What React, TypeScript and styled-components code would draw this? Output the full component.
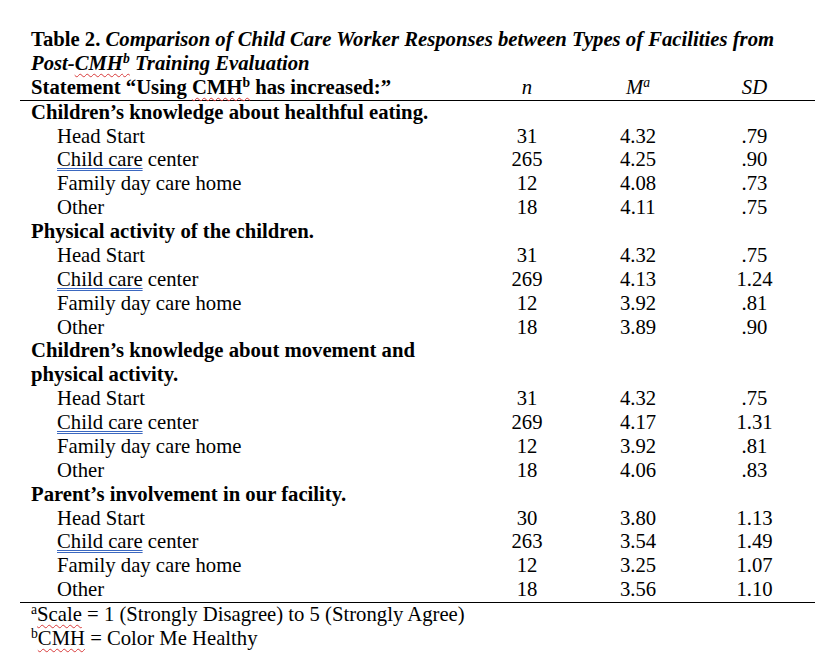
import styled, { createGlobalStyle } from 'styled-components'

const GlobalStyle = createGlobalStyle`
  html, body {
    margin: 0;
    padding: 0;
    background: #fff;
  }
  body {
    font-family: "Liberation Serif", "Times New Roman", serif;
    color: #000;
  }
`

const Page = styled.div`
  width: 819px;
  min-height: 657px;
  padding: 28px 0 0 20px;
  box-sizing: border-box;
  font-size: 20.7px;
  line-height: 23.88px;
`

const Caption = styled.div`
  padding-left: 11px;
  font-weight: 700;
  white-space: nowrap;

  em {
    font-style: italic;
  }
`

const Table = styled.div`
  width: 795px;
`

const Row = styled.div<{ $rule?: boolean }>`
  display: grid;
  grid-template-columns: 452px 110px 112px 121px;
  border-bottom: ${p => (p.$rule ? '1.3px solid #000' : 'none')};
`

const Label = styled.div<{ $indent?: boolean; $bold?: boolean }>`
  padding-left: ${p => (p.$indent ? '37px' : '11px')};
  font-weight: ${p => (p.$bold ? 700 : 400)};
`

const Cell = styled.div<{ $italic?: boolean }>`
  text-align: center;
  font-style: ${p => (p.$italic ? 'italic' : 'normal')};
`

const Sup = styled.sup`
  font-size: 0.66em;
  line-height: 0;
  vertical-align: 0.5em;
`

const Squiggle = styled.span`
  text-decoration: underline wavy #d83a3a;
  text-decoration-thickness: 1px;
  text-underline-offset: 3px;
`

const Grammar = styled.span`
  text-decoration: underline double #3b68c0;
  text-decoration-thickness: 1px;
  text-underline-offset: 2px;
`

const Notes = styled.div`
  padding-left: 11px;
`

type Item = { name: string; n: string; m: string; sd: string }
type Section = { title: string; items: Item[] }

const makeItems = (vals: [string, string, string][]): Item[] =>
  ['Head Start', 'Child care center', 'Family day care home', 'Other'].map((name, i) => ({
    name,
    n: vals[i][0],
    m: vals[i][1],
    sd: vals[i][2]
  }))

const sections: Section[] = [
  {
    title: 'Children’s knowledge about healthful eating.',
    items: makeItems([
      ['31', '4.32', '.79'],
      ['265', '4.25', '.90'],
      ['12', '4.08', '.73'],
      ['18', '4.11', '.75']
    ])
  },
  {
    title: 'Physical activity of the children.',
    items: makeItems([
      ['31', '4.32', '.75'],
      ['269', '4.13', '1.24'],
      ['12', '3.92', '.81'],
      ['18', '3.89', '.90']
    ])
  },
  {
    title: 'Children’s knowledge about movement and physical activity.',
    items: makeItems([
      ['31', '4.32', '.75'],
      ['269', '4.17', '1.31'],
      ['12', '3.92', '.81'],
      ['18', '4.06', '.83']
    ])
  },
  {
    title: 'Parent’s involvement in our facility.',
    items: makeItems([
      ['30', '3.80', '1.13'],
      ['263', '3.54', '1.49'],
      ['12', '3.25', '1.07'],
      ['18', '3.56', '1.10']
    ])
  }
]

function ItemName({ name }: { name: string }) {
  if (name === 'Child care center') {
    return (
      <>
        <Grammar>Child care</Grammar> center
      </>
    )
  }
  return <>{name}</>
}

export default function App() {
  return (
    <>
      <GlobalStyle />
      <Page>
        <Caption>
          Table 2. <em>Comparison of Child Care Worker Responses between Types of Facilities from</em>
          <br />
          <em>
            Post-<Squiggle>CMH<Sup>b</Sup></Squiggle> Training Evaluation
          </em>
        </Caption>
        <Table>
          <Row $rule>
            <Label $bold>
              Statement “Using <Squiggle>CMH<Sup>b</Sup></Squiggle> has increased:”
            </Label>
            <Cell $italic>n</Cell>
            <Cell $italic>
              M<Sup>a</Sup>
            </Cell>
            <Cell $italic>SD</Cell>
          </Row>
          {sections.map((s, si) => (
            <div key={s.title}>
              <Row>
                <Label $bold>{s.title}</Label>
              </Row>
              {s.items.map((it, ii) => (
                <Row key={it.name} $rule={si === sections.length - 1 && ii === s.items.length - 1}>
                  <Label $indent>
                    <ItemName name={it.name} />
                  </Label>
                  <Cell>{it.n}</Cell>
                  <Cell>{it.m}</Cell>
                  <Cell>{it.sd}</Cell>
                </Row>
              ))}
            </div>
          ))}
        </Table>
        <Notes>
          <Sup>a</Sup>
          <Squiggle>Scale</Squiggle> = 1 (Strongly Disagree) to 5 (Strongly Agree)
          <br />
          <Sup>b</Sup>
          <Squiggle>CMH</Squiggle> = Color Me Healthy
        </Notes>
      </Page>
    </>
  )
}
